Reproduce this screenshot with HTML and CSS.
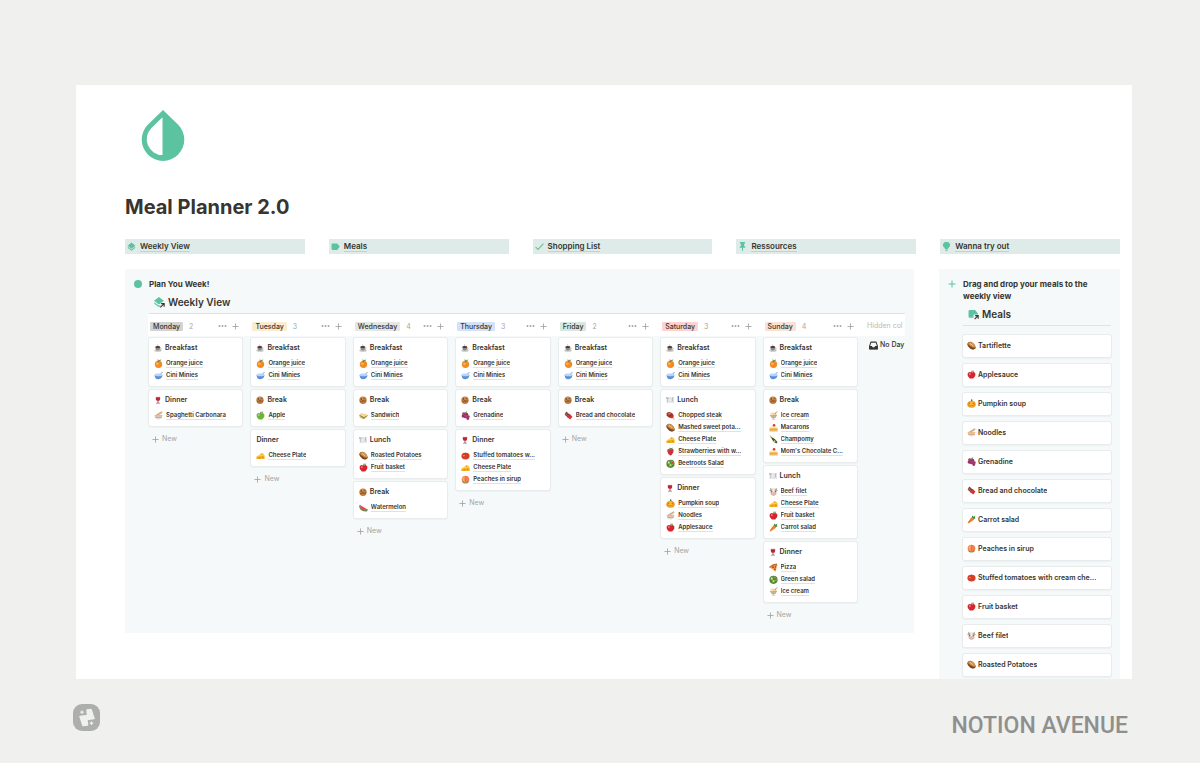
FILE: index.html
```
<!DOCTYPE html>
<html lang="en">
<head>
  <meta charset="utf-8">
  <title>Meal Planner 2.0</title>
  <link rel="stylesheet" href="styles.css">
</head>
<body>
  <svg class="sprite" aria-hidden="true">
    <!-- interface icons -->
    <symbol id="drop" viewBox="0 0 44 52"><path fill="#5bc3a0" d="M22 0 37.500 15A21.700 21.700 0 1 1 6.500 15Z"/><path fill="#fff" d="M21.500 7.500 10 18.500A16.200 16.200 0 0 0 21.500 46Z"/></symbol>
    <symbol id="layers" viewBox="0 0 16 16"><path fill="#5bc3a0" d="M8 1 15 6.500 8 12 1 6.500ZM2.200 9 8 13.400 13.800 9 15 10 8 15.500 1 10Z"/></symbol>
    <symbol id="tag" viewBox="0 0 16 16"><path fill="#5bc3a0" d="M3 2.500H11L15.500 8 11 14H3Q1 14 1 12V4.500Q1 2.500 3 2.500Z"/></symbol>
    <symbol id="check" viewBox="0 0 16 16"><path fill="none" stroke="#6cc58f" stroke-width="2" d="M1 9 5.500 13.200 15 3"/></symbol>
    <symbol id="pin" viewBox="0 0 16 16"><path fill="#5bc3a0" d="M3.500 0H12.500V2.500H11V6.500L13.500 10H9V15L8 16 7 15V10H2.500L5 6.500V2.500H3.500Z"/></symbol>
    <symbol id="bulb" viewBox="0 0 16 16"><path fill="#5bc3a0" d="M8 0A5.500 5.500 0 0 1 11 10.500V12.500H5V10.500A5.500 5.500 0 0 1 8 0ZM6 13.500H10V15.500H6Z"/></symbol>
    <symbol id="layers-link" viewBox="0 0 20 20"><path fill="#5bc3a0" d="M9 0 18 7 9 13.500 0 7ZM1 10 9 16 12 14V17L9 18.500 0 12Z"/><path fill="none" stroke="#f6f9fa" stroke-width="5" d="M12 19 18 13"/><path fill="none" stroke="#37352f" stroke-width="2" d="M11.500 19 18 12.500M13 12H18.500V17.500"/></symbol>
    <symbol id="tag-link" viewBox="0 0 20 20"><path fill="#5bc3a0" d="M3 2H13L18 8V10H10V16H3Q1 16 1 14V4Q1 2 3 2Z"/><path fill="none" stroke="#37352f" stroke-width="2" d="M12 18.500 18 12.500M13 12H18.500V17.500"/></symbol>
    <symbol id="plus" viewBox="0 0 16 16"><path fill="none" stroke="currentColor" stroke-width="2" d="M8 1V15M1 8H15"/></symbol>
    <symbol id="dots" viewBox="0 0 18 16"><g fill="currentColor"><circle cx="3" cy="8" r="2"/><circle cx="9" cy="8" r="2"/><circle cx="15" cy="8" r="2"/></g></symbol>
    <symbol id="inbox" viewBox="0 0 16 16"><path fill="none" stroke="#37352f" stroke-width="1.800" d="M3.500 2H12.500L15 9V14H1V9Z"/><path fill="#37352f" d="M1 9H5Q6 11.500 8 11.500T11 9H15V14.500H1Z"/></symbol>
    <symbol id="logo" viewBox="0 0 27 27"><rect width="27" height="27" rx="9" fill="#adafaf"/><path fill="#f0f0ee" stroke="#f0f0ee" stroke-width="1.500" stroke-linejoin="round" d="M14 6 18 5.500 21 14.500 14 15.500 14.500 21 10 21.500 7 12.500 14.500 11.500Z"/><path stroke="#f0f0ee" stroke-width="1.200" d="M9 6.500V10M7.200 8.200H10.800M18.500 17.500V21M16.700 19.200H20.300"/></symbol>

    <!-- food icons -->
    <symbol id="coffee" viewBox="0 0 16 16"><ellipse cx="8" cy="13" rx="7.500" ry="2.500" fill="#c5c5c5"/><path fill="#8b8986" d="M3 6H12Q12.500 13 7.500 13T3 6Z"/><ellipse cx="7.500" cy="6" rx="5" ry="2" fill="#4d342a"/><path fill="none" stroke="#999" stroke-width="1.300" d="M12 7.500Q15 7 14 9.500T11 11M7 1Q9 2.500 7 4"/></symbol>
    <symbol id="orange" viewBox="0 0 16 16"><circle cx="8" cy="9.500" r="6.500" fill="#f28a24"/><circle cx="6" cy="8.500" r="2.500" fill="#fbaf4b"/><path fill="#4f8d2f" d="M8 4Q9 1 13 1 12 4.500 8 4Z"/><path stroke="#785126" stroke-width="1.500" d="M8 5 7 1"/></symbol>
    <symbol id="bowl" viewBox="0 0 16 16"><path stroke="#6683ae" stroke-width="1.600" d="M10 7 15 2"/><path fill="#5c8fda" d="M1 7H15Q14.500 14 8 14.500T1 7Z"/><ellipse cx="8" cy="7" rx="7" ry="2.500" fill="#b5d4fb"/></symbol>
    <symbol id="wine" viewBox="0 0 16 16"><path fill="#ead9da" d="M4 1H12L12.500 6Q12 9.500 8 9.500T3.500 6Z"/><path fill="#c51f34" d="M3.700 2.500H12.300V6Q12 10 8 10T3.500 6Z"/><path fill="#8b7378" d="M7 9H9V13L12 14V15H4V14L7 13Z"/></symbol>
    <symbol id="noodles" viewBox="0 0 16 16"><path stroke="#ae805a" stroke-width="1.200" d="M4 7 14 1M6 7 15 2.500"/><ellipse cx="8" cy="8" rx="7" ry="2" fill="#e3b56c"/><path fill="#e3dcd5" d="M1 8.500H15Q14 15 8 15T1 8.500Z"/><path stroke="#cf7a60" stroke-width="1.400" d="M2 11H14"/></symbol>
    <symbol id="apple" viewBox="0 0 16 16"><path fill="currentColor" d="M8 4.500Q13 2 15 6.500 16 11 11 15 9 15.500 8 15 7 15.500 5 15 0 11 1 6.500 3 2 8 4.500Z"/><ellipse cx="5" cy="7.500" rx="1.500" ry="2" fill="#fff" opacity=".4"/><path stroke="#704629" stroke-width="1.300" d="M8 5 9 1"/><path fill="#62a344" d="M9 4Q9 1 13 1 13 4 9 4Z"/></symbol>
    <symbol id="cheese" viewBox="0 0 16 16"><path fill="#ffd051" d="M1 10 10 3Q15 4 15 8V14L1 14Z"/><path fill="#f4ad25" d="M1 10 15 8V14H1Z"/><circle cx="6" cy="12" r="1.500" fill="#d88b16"/><circle cx="12" cy="11" r="1.300" fill="#d88b16"/><circle cx="10" cy="6" r="1.200" fill="#dfa027"/></symbol>
    <symbol id="cookie" viewBox="0 0 16 16"><circle cx="8" cy="8.500" r="7.300" fill="#bd7b3e"/><path fill="#d79b58" d="M3 6Q7 0 12 5L9 7Z"/><g fill="#593522"><circle cx="5" cy="6" r="1.300"/><circle cx="10" cy="5" r="1.100"/><circle cx="8" cy="10" r="1.300"/><circle cx="12" cy="10" r="1.100"/><circle cx="4" cy="11" r="1"/></g></symbol>
    <symbol id="sandwich" viewBox="0 0 16 16"><path fill="#b97731" d="M1 9 9 14 15 9V7L9 11 1 7Z"/><path fill="#68ac47" d="M1 8 9 12 15 8V7L9 10 1 6.500Z"/><path fill="#f8d795" d="M1 6Q3 3 7 4L15 6Q14 8 9 10Z"/><path fill="#e8a84d" d="M1 9.500 8 13.500V15L1 11Z"/></symbol>
    <symbol id="plate" viewBox="0 0 16 16"><circle cx="8" cy="8" r="5" fill="#e7eaec" stroke="#c5c9cc"/><circle cx="8" cy="8" r="2.500" fill="#f8f8f8" stroke="#d5d7d9"/><path fill="none" stroke="#a3a8ac" stroke-width="1.200" d="M1 2V6M2.500 2V14M4 2V6M14 14V2Q12 5 13 9H14"/></symbol>
    <symbol id="potato" viewBox="0 0 16 16"><path fill="#7d4b21" d="M1 4Q5 -1 11 4 17 9 15 13 11 18 5 13 -1 8 1 4Z"/><path fill="#d0924c" d="M2 3Q6 0 11 4 16 8 14 12 10 12 6 9 1 6 2 3Z"/><path stroke="#f1ca90" stroke-width="1.500" d="M5 4 11 8.500"/></symbol>
    <symbol id="watermelon" viewBox="0 0 16 16"><path fill="#4b9c48" d="M0 5Q1 16 14 15L16 12Q5 12 2 4Z"/><path fill="#ed4f5b" d="M1 3 16 12Q7 15 3.500 10.500Z"/><path stroke="#5b2527" d="M6 8.500V9.500M9 10V11"/></symbol>
    <symbol id="grapes" viewBox="0 0 16 16"><g fill="#9b2e6a"><circle cx="5" cy="5" r="3"/><circle cx="10" cy="6" r="3"/><circle cx="4" cy="9" r="3"/><circle cx="8" cy="10" r="3"/><circle cx="13" cy="10" r="2.500"/><circle cx="12" cy="13.500" r="2.500"/></g><circle cx="5" cy="5" r="1" fill="#cb6798"/><circle cx="9" cy="9" r="1" fill="#cb6798"/><path fill="#6b9e47" d="M6 3 11 0 10 4Z"/></symbol>
    <symbol id="tomato" viewBox="0 0 16 16"><ellipse cx="8" cy="9" rx="7.300" ry="6" fill="#d63d24"/><ellipse cx="5" cy="8" rx="2" ry="1.500" fill="#ef8263"/><path fill="#527a2e" d="M8 2 9 4 12 4 9 5.500 8 7 7 5.500 4 6 6 4.500 4 3 7 4Z"/></symbol>
    <symbol id="peach" viewBox="0 0 16 16"><circle cx="8" cy="8" r="6.800" fill="#f27d50"/><path fill="#f9a866" d="M3 4Q6 1 8 3 6 8 8 13 1 11 3 4Z"/><path fill="none" stroke="#d95747" d="M8 2Q6 8 8 13"/><path fill="#669b45" d="M2 12Q6 11 8 15 4 16 2 12ZM14 12Q10 11 8 15 12 16 14 12Z"/></symbol>
    <symbol id="chocolate" viewBox="0 0 16 16"><path fill="#704033" d="M4 1 11 7 7 12 1 6Z"/><path stroke="#b9897a" d="M2 5 8 10M6 3 3 8"/><path fill="#dc2e37" d="M7 7 10 5 15 10 11 15 6 11Z"/></symbol>
    <symbol id="meat" viewBox="0 0 16 16"><path stroke="#dec8ad" stroke-width="2.500" d="M9 10 15 15"/><path fill="#9e3429" d="M1 4Q6 -1 12 5 16 11 10 13 3 12 1 8Z"/><path fill="#d87055" d="M3 4Q7 2 9 5L5 7Z"/><path fill="#d1352a" d="M8 10 13 7 13 12 10 13Z"/></symbol>
    <symbol id="strawberry" viewBox="0 0 16 16"><path fill="#cf263e" d="M3 4Q8 1 13 4 15 9 9 15 7 16 4 12 1 7 3 4Z"/><path fill="#5a9341" d="M3 4 7 3 6 1 9 2 12 1 11 4 13 6 9 5 5 6Z"/><path stroke="#f18d78" d="M5 8V9M8 7V8M11 8V9M7 11V12"/></symbol>
    <symbol id="salad" viewBox="0 0 16 16"><circle cx="8" cy="8.500" r="7.300" fill="#52863b"/><circle cx="8" cy="8" r="5.500" fill="#75a94b"/><circle cx="5" cy="6" r="1.600" fill="#dfebb8"/><circle cx="11" cy="7" r="1.800" fill="#d54937"/><circle cx="8" cy="11" r="1.500" fill="#eed16c"/><path stroke="#356d2c" stroke-width="1.500" d="M7 4 9 8M3 9 5 12M12 11 10 13"/></symbol>
    <symbol id="pumpkin" viewBox="0 0 16 16"><ellipse cx="8" cy="9.500" rx="7.500" ry="6" fill="#ee951c"/><ellipse cx="8" cy="9.500" rx="3" ry="6" fill="#ffb938"/><path fill="#a9661b" d="M5 7 6.500 9H3.500ZM11 7 12.500 9H9.500ZM4.500 11.500H11.500L9 13H7Z"/><path fill="#587b2c" d="M7 4Q6 1 9 0L10 4Z"/></symbol>
    <symbol id="sundae" viewBox="0 0 16 16"><path fill="#c9b08f" d="M2 7H14L12 12 9 13V14H11V15H5V14H7V13L4 12Z"/><circle cx="6" cy="5.500" r="3.500" fill="#f1dfb8"/><circle cx="10.500" cy="5.500" r="3" fill="#ebcb9a"/><path stroke="#bc7b38" stroke-width="1.500" d="M11 5 14 1"/><path stroke="#a9a9a9" stroke-width="1.300" d="M2 8H14"/></symbol>
    <symbol id="cake" viewBox="0 0 16 16"><path fill="#fbe6b4" d="M1 8 9 3 15 8V15H1Z"/><path fill="#f1bf63" d="M1 9H15V15H1Z"/><path stroke="#e0936a" stroke-width="1.300" d="M1 12H15"/><circle cx="9" cy="4" r="2.300" fill="#da3b2f"/></symbol>
    <symbol id="bottle" viewBox="0 0 16 16"><path fill="#365b2b" d="M2 2 5 4 9 6Q15 11 15 13L13 15Q9 14 6 9L4 5Z"/><path fill="#dfc371" d="M1 1 3 1 5 3 3 5ZM10 9 12 11 10 13 8 11Z"/></symbol>
    <symbol id="cow" viewBox="0 0 16 16"><path fill="#b4a79b" d="M2 1 4 3H12L14 1 14 5 16 6 13 8V13Q8 18 3 13V8L0 6 2 5Z"/><path fill="#f1eee9" d="M6 3H10L11 11H5Z"/><ellipse cx="8" cy="12" rx="4.500" ry="3" fill="#e6b9ab"/><path stroke="#493d38" stroke-width="1.300" d="M5 7V9M11 7V9"/></symbol>
    <symbol id="carrot" viewBox="0 0 16 16"><path fill="#f27a2a" d="M8 4 13 8 4 14 1 15 2 12Z"/><path fill="#3e8a3c" d="M9 5 9 1 12 3 15 1 14 4 15 6 12 7Z"/></symbol>
    <symbol id="pizza" viewBox="0 0 16 16"><path fill="#b86e2c" d="M0 7Q7 1 14 1L15 5 2 9Z"/><path fill="#f5a84b" d="M2 8Q7 4 14 4L12 16Z"/><g fill="#ca392a"><circle cx="7" cy="7.500" r="1.800"/><circle cx="11.500" cy="7" r="1.600"/><circle cx="10.500" cy="11" r="1.600"/></g></symbol>
  </svg>

  <main class="page">
    <svg class="page-icon"><use href="#drop"/></svg>
    <h1>Meal Planner 2.0</h1>

    <nav class="links">
      <a href="#weekly"><svg class="icon"><use href="#layers"/></svg><span>Weekly View</span></a>
      <a href="#meals"><svg class="icon"><use href="#tag"/></svg><span>Meals</span></a>
      <a href="#shopping"><svg class="icon"><use href="#check"/></svg><span>Shopping List</span></a>
      <a href="#ressources"><svg class="icon"><use href="#pin"/></svg><span>Ressources</span></a>
      <a href="#try"><svg class="icon"><use href="#bulb"/></svg><span>Wanna try out</span></a>
    </nav>

    <div class="content">
      <section class="panel week" id="weekly">
        <span class="bullet"></span>
        <div class="panel-body">
          <p class="callout">Plan You Week!</p>
          <h2><svg class="link-icon"><use href="#layers-link"/></svg>Weekly View</h2>
          <div class="board" id="board"></div>
        </div>
      </section>

      <section class="panel side" id="meals">
        <svg class="side-plus"><use href="#plus"/></svg>
        <div class="panel-body">
          <p class="callout">Drag and drop your meals to the weekly view</p>
          <h2><svg class="link-icon"><use href="#tag-link"/></svg>Meals</h2>
          <div class="meal-list" id="meal-list"></div>
        </div>
      </section>
    </div>
  </main>

  <footer>
    <svg class="logo"><use href="#logo"/></svg>
    <span class="brand">NOTION AVENUE</span>
  </footer>

  <script src="script.js"></script>
</body>
</html>
```
FILE: styles.css
```
* {
  box-sizing: border-box;
}
body {
  display: flex;
  flex-direction: column;
  height: 100vh;
  margin: 0;
  padding: 85px 68px 0 76px;
  background: #f0f0ee;
  color: #37352f;
  font-family: Inter, "Liberation Sans", sans-serif;
}
h1, h2, p, ul {
  margin: 0;
  padding: 0;
}
a {
  color: inherit;
  text-decoration: none;
}
button {
  display: flex;
  align-items: center;
  padding: 0;
  border: 0;
  background: none;
  color: #a5a5a3;
  font: inherit;
  cursor: pointer;
}
svg {
  display: block;
  flex: none;
}
.sprite {
  position: absolute;
  width: 0;
  height: 0;
}

/* page */
.page {
  display: flex;
  flex-direction: column;
  flex: 1;
  min-height: 0;
  padding: 25px 12px 0 49px;
  background: #fff;
  overflow: hidden;
}
.page-icon {
  width: 44px;
  height: 51px;
  margin-left: 16px;
}
h1 {
  margin-top: 33px;
  font-size: 20px;
  line-height: 26px;
}
.links {
  display: grid;
  grid-template-columns: repeat(5, 1fr);
  gap: 24px;
  margin-top: 19px;
}
.links a {
  display: flex;
  align-items: center;
  gap: 4px;
  height: 15px;
  padding-left: 2px;
  background: #dfebe8;
  font-size: 8px;
  font-weight: 600;
  line-height: 10px;
}
.links span {
  border-bottom: 1px solid #c5d1cd;
}
.icon {
  width: 9px;
  height: 9px;
}

/* panels */
.content {
  display: grid;
  grid-template-columns: 789fr 181fr;
  gap: 25px;
  flex: 1;
  margin-top: 15px;
}
.panel {
  display: flex;
  align-items: flex-start;
  padding: 9px 9px 12px;
  background: #f5f9fa;
}
.week {
  align-self: start;
}
.panel-body {
  flex: 1;
  min-width: 0;
}
.bullet {
  width: 8px;
  height: 8px;
  margin: 2px 7px 0 0;
  border-radius: 50%;
  background: #5bc3a0;
}
.side-plus {
  width: 8px;
  height: 8px;
  margin: 2px 7px 0 0;
  color: #5bc3a0;
}
.callout {
  font-size: 8px;
  font-weight: 700;
  line-height: 12px;
}
h2 {
  display: flex;
  align-items: center;
  gap: 3px;
  margin-top: 5px;
  padding: 0 0 4px 5px;
  border-bottom: 1px solid #e0e3e3;
  font-size: 10px;
  font-weight: 600;
  line-height: 14px;
}
.link-icon {
  width: 11px;
  height: 11px;
}

/* weekly board */
.board {
  display: grid;
  grid-template-columns: repeat(7, 1fr) 39px;
  column-gap: 9px;
  margin-left: -1px;
  padding-left: 1px;
  background: linear-gradient(#fff 22px, transparent 22px);
  overflow: hidden;
}
.day, .hidden-days {
  min-width: 0;
  font-size: 7px;
}
.day-head {
  display: flex;
  align-items: center;
  gap: 6px;
  height: 24px;
  padding: 0 3px 0 1px;
  color: #a5a5a3;
}
.tag {
  padding: 0 3px;
  border-radius: 1px;
  color: #37352f;
  font-weight: 500;
  line-height: 9px;
}
.gray { background: #d3d3d2; }
.yellow { background: #faecd0; }
.light { background: #e6e6e3; }
.blue { background: #d3e2f8; }
.green { background: #d7e8e1; }
.red { background: #fdd3d1; }
.orange { background: #fae0d5; }
.actions {
  display: flex;
  gap: 5px;
  margin-left: auto;
}
.dots {
  width: 9px;
  height: 8px;
}
.plus {
  width: 7px;
  height: 7px;
}
.actions button {
  height: 8px;
}
.card {
  margin-bottom: 4px;
  padding: 5px;
  border-radius: 2px;
  background: #fff;
  box-shadow: 0 0 0 1px #e9eced, 0 1px 2px #d8dcdd;
}
.card h3 {
  display: flex;
  align-items: center;
  gap: 3px;
  margin: 0 0 4px;
  font-size: 7px;
  font-weight: 600;
  line-height: 10px;
}
.card ul {
  list-style: none;
}
.card li {
  display: flex;
  align-items: center;
  gap: 3px;
  height: 12px;
  font-size: 6px;
  font-weight: 600;
  line-height: 8px;
}
.card li a {
  border-bottom: 1px solid #e1e1df;
  overflow: hidden;
  text-overflow: ellipsis;
  white-space: nowrap;
}
.food {
  width: 9px;
  height: 9px;
}
.card h3 .food {
  width: 8px;
  height: 8px;
}
.new {
  gap: 3px;
  margin: 7px 0 0 3px;
  line-height: 12px;
}
.hidden-days {
  padding-left: 1px;
  white-space: nowrap;
}
.hidden-days p {
  color: #b9bab9;
  line-height: 24px;
}
.hidden-days button {
  gap: 2px;
  margin: 1px 0 0 2px;
  color: #37352f;
  font-weight: 500;
  line-height: 12px;
}

/* meals to drag */
.meal-list {
  display: grid;
  gap: 7px;
  padding-top: 9px;
}
.meal {
  display: flex;
  align-items: center;
  gap: 2px;
  height: 22px;
  padding: 0 8px 2px 4px;
  border-radius: 2px;
  background: #fff;
  box-shadow: 0 0 0 1px #e9eced, 0 1px 2px #d8dcdd;
  font-size: 7px;
  font-weight: 600;
}
.meal span {
  overflow: hidden;
  text-overflow: ellipsis;
  white-space: nowrap;
}

.food-red { color: #d8242f; }
.food-green { color: #6bb53a; }

/* footer */
footer {
  display: flex;
  align-items: center;
  justify-content: space-between;
  flex: none;
  height: 84px;
  padding: 0 4px 8px 0;
}
.logo {
  width: 27px;
  height: 27px;
  margin: 0 0 0 -3px;
}
.brand {
  padding-top: 16px;
  color: #8f8f8e;
  font-family: Roboto, sans-serif;
  font-size: 23px;
  font-weight: 500;
}
```
FILE: script.js
```
var breakfast = ['coffee', 'Breakfast', ['orange', 'Orange juice'], ['bowl', 'Cini Minies']];

var days = [
  ['Monday', 'gray', 2, [
    breakfast,
    ['wine', 'Dinner', ['noodles', 'Spaghetti Carbonara']]
  ]],
  ['Tuesday', 'yellow', 3, [
    breakfast,
    ['cookie', 'Break', ['apple green', 'Apple']],
    ['', 'Dinner', ['cheese', 'Cheese Plate']]
  ]],
  ['Wednesday', 'light', 4, [
    breakfast,
    ['cookie', 'Break', ['sandwich', 'Sandwich']],
    ['plate', 'Lunch', ['potato', 'Roasted Potatoes'], ['apple red', 'Fruit basket']],
    ['cookie', 'Break', ['watermelon', 'Watermelon']]
  ]],
  ['Thursday', 'blue', 3, [
    breakfast,
    ['cookie', 'Break', ['grapes', 'Grenadine']],
    ['wine', 'Dinner', ['tomato', 'Stuffed tomatoes w...'], ['cheese', 'Cheese Plate'], ['peach', 'Peaches in sirup']]
  ]],
  ['Friday', 'green', 2, [
    breakfast,
    ['cookie', 'Break', ['chocolate', 'Bread and chocolate']]
  ]],
  ['Saturday', 'red', 3, [
    breakfast,
    ['plate', 'Lunch', ['meat', 'Chopped steak'], ['potato', 'Mashed sweet pota...'], ['cheese', 'Cheese Plate'], ['strawberry', 'Strawberries with w...'], ['salad', 'Beetroots Salad']],
    ['wine', 'Dinner', ['pumpkin', 'Pumpkin soup'], ['noodles', 'Noodles'], ['apple red', 'Applesauce']]
  ]],
  ['Sunday', 'orange', 4, [
    breakfast,
    ['cookie', 'Break', ['sundae', 'Ice cream'], ['cake', 'Macarons'], ['bottle', 'Champomy'], ['cake', "Mom's Chocolate C..."]],
    ['plate', 'Lunch', ['cow', 'Beef filet'], ['cheese', 'Cheese Plate'], ['apple red', 'Fruit basket'], ['carrot', 'Carrot salad']],
    ['wine', 'Dinner', ['pizza', 'Pizza'], ['salad', 'Green salad'], ['sundae', 'Ice cream']]
  ]]
];

var meals = [
  ['potato', 'Tartiflette'],
  ['apple red', 'Applesauce'],
  ['pumpkin', 'Pumpkin soup'],
  ['noodles', 'Noodles'],
  ['grapes', 'Grenadine'],
  ['chocolate', 'Bread and chocolate'],
  ['carrot', 'Carrot salad'],
  ['peach', 'Peaches in sirup'],
  ['tomato', 'Stuffed tomatoes with cream che...'],
  ['apple red', 'Fruit basket'],
  ['cow', 'Beef filet'],
  ['potato', 'Roasted Potatoes']
];

function icon(name, cls) {
  return '<svg class="' + cls + '" aria-hidden="true"><use href="#' + name + '"/></svg>';
}

// food names can carry a colour, like "apple red"
function food(name) {
  var parts = name.split(' ');
  return icon(parts[0], parts[1] ? 'food food-' + parts[1] : 'food');
}

function card(c) {
  var items = c.slice(2).map(function(item) {
    return '<li>' + food(item[0]) + '<a href="#meals">' + item[1] + '</a></li>';
  });
  return '<article class="card"><h3>' + (c[0] ? food(c[0]) : '') + c[1] + '</h3><ul>' + items.join('') + '</ul></article>';
}

var html = days.map(function(d) {
  return '<div class="day"><div class="day-head"><span class="tag ' + d[1] + '">' + d[0] + '</span><span>' + d[2] + '</span>' +
    '<div class="actions"><button aria-label="More">' + icon('dots', 'dots') + '</button>' +
    '<button aria-label="Add">' + icon('plus', 'plus') + '</button></div></div>' +
    d[3].map(card).join('') +
    '<button class="new">' + icon('plus', 'plus') + 'New</button></div>';
}).join('');

html += '<div class="hidden-days"><p>Hidden col</p><button>' + icon('inbox', 'food') + 'No Day</button></div>';

document.getElementById('board').innerHTML = html;

document.getElementById('meal-list').innerHTML = meals.map(function(m) {
  return '<a class="meal" href="#meals">' + food(m[0]) + '<span>' + m[1] + '</span></a>';
}).join('');
```
